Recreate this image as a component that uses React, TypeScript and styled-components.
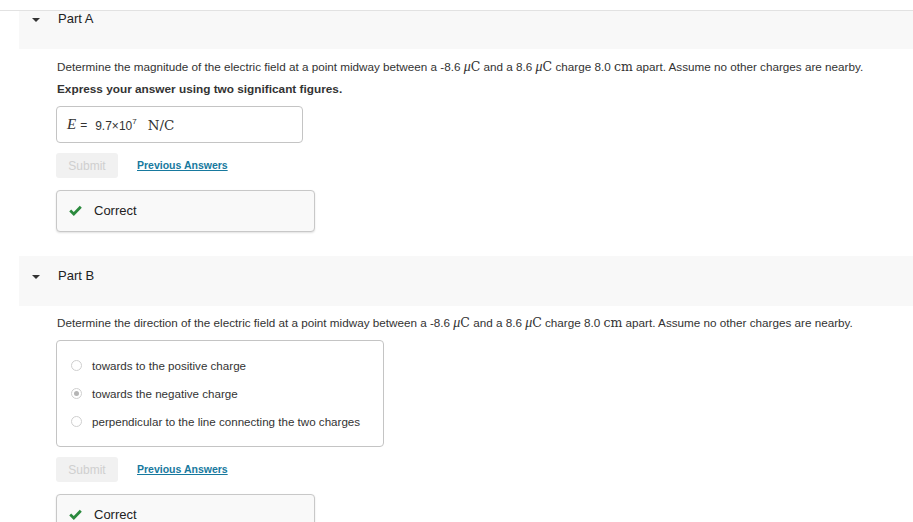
import React from 'react';
import styled, { createGlobalStyle } from 'styled-components';

const Global = createGlobalStyle`
  html, body {
    margin: 0;
    padding: 0;
    background: #ffffff;
    font-family: "Liberation Sans", Arial, sans-serif;
    color: #333333;
  }
`;

interface HeadProps {
  top: number;
  height: number;
}

const S = {
  Page: styled.div`
    width: 913px;
    height: 522px;
    overflow: hidden;
    padding-top: 10px;
    box-sizing: border-box;
  `,
  TopRule: styled.div`
    height: 1px;
    background: #e2e2e2;
  `,
  Part: styled.section`
    margin-left: 19px;
  `,
  PartHead: styled.div<HeadProps>`
    display: flex;
    align-items: flex-start;
    box-sizing: border-box;
    height: ${p => p.height}px;
    padding-top: ${p => p.top}px;
    background: #f8f8f8;
    font-size: 13px;
    line-height: 16px;
    color: #222;
  `,
  Caret: styled.span`
    width: 0;
    height: 0;
    margin: 7px 18px 0 13px;
    border-left: 4px solid transparent;
    border-right: 4px solid transparent;
    border-top: 4px solid #333;
  `,
  Body: styled.div`
    padding: 0 0 0 37px;
  `,
  Prompt: styled.p<{ top: number }>`
    margin: ${p => p.top}px 0 0 1px;
    font-size: 11.7px;
    line-height: 18px;
    color: #333;
  `,
  Hint: styled.p`
    margin: 4px 0 0 1px;
    font-size: 11.8px;
    line-height: 18px;
    font-weight: bold;
    color: #333;
  `,
  Math: styled.span`
    font-family: "DejaVu Serif", "Liberation Serif", serif;
    font-size: 12.5px;
  `,
  Mu: styled.span`
    font-family: "Liberation Serif", "DejaVu Serif", serif;
    font-style: italic;
    font-size: 14px;
  `,
  AnswerBox: styled.div`
    margin-top: 8px;
    width: 247px;
    height: 37px;
    box-sizing: border-box;
    border: 1px solid #c4c4c4;
    border-radius: 4px;
    display: flex;
    align-items: center;
    padding-left: 10px;
    font-size: 12px;
    color: #333;
  `,
  VarE: styled.span`
    font-family: "Liberation Serif", "DejaVu Serif", serif;
    font-style: italic;
    font-size: 15px;
    margin-right: 4px;
  `,
  Value: styled.span`
    margin-left: 8px;
  `,
  Sup: styled.sup`
    font-size: 8px;
    vertical-align: 6px;
  `,
  Unit: styled.span`
    font-family: "DejaVu Serif", "Liberation Serif", serif;
    font-size: 13.5px;
    margin-left: 11px;
  `,
  Actions: styled.div`
    display: flex;
    align-items: center;
    margin-top: 10px;
  `,
  Submit: styled.button`
    width: 62px;
    height: 25px;
    border: none;
    border-radius: 3px;
    background: #f1f1f1;
    color: #cfcfcf;
    font-family: "Liberation Sans", Arial, sans-serif;
    font-size: 12px;
    padding: 0;
  `,
  Link: styled.a`
    margin-left: 19px;
    margin-top: -1px;
    font-size: 10.5px;
    font-weight: bold;
    color: #17799e;
    text-decoration: underline;
  `,
  Feedback: styled.div`
    margin-top: 12px;
    width: 259px;
    height: 42px;
    box-sizing: border-box;
    border: 1px solid #c8c8c8;
    border-radius: 4px;
    background: #f9f9f9;
    box-shadow: 0 1px 2px rgba(0, 0, 0, 0.12);
    display: flex;
    align-items: center;
    padding: 0 0 2px 12px;
    font-size: 13px;
    color: #222;
  `,
  Check: styled.svg`
    width: 13px;
    height: 11px;
    margin-right: 12px;
  `,
  Spacer: styled.div`
    height: 24px;
  `,
  Options: styled.div`
    margin-top: 8px;
    width: 328px;
    height: 107px;
    box-sizing: border-box;
    border: 1px solid #c4c4c4;
    border-radius: 4px;
    padding: 15px 0 0 14px;
    display: flex;
    flex-direction: column;
    gap: 10px;
  `,
  Option: styled.label`
    display: flex;
    align-items: center;
    height: 18px;
    font-size: 11.6px;
    color: #333;
  `,
  Radio: styled.span<{ checked?: boolean }>`
    width: 11px;
    height: 11px;
    box-sizing: border-box;
    border-radius: 50%;
    border: 1px solid #cfcfcf;
    background: #fff;
    margin-right: 10px;
    display: flex;
    align-items: center;
    justify-content: center;
    &::after {
      content: '';
      width: 5px;
      height: 5px;
      border-radius: 50%;
      background: ${p => (p.checked ? '#b5b5b5' : 'transparent')};
    }
  `,
};

const MuC = () => (
  <S.Math>
    <S.Mu>μ</S.Mu>C
  </S.Math>
);

const CheckIcon = () => (
  <S.Check viewBox="0 0 13 11">
    <path d="M1.2 5.6 L4.8 9 L11.8 1.8" fill="none" stroke="#2b8a3e" strokeWidth="2.8" />
  </S.Check>
);

const Header: React.FC<{ label: string; top: number; height: number }> = ({ label, top, height }) => (
  <S.PartHead top={top} height={height}>
    <S.Caret />
    {label}
  </S.PartHead>
);

const Actions = () => (
  <S.Actions>
    <S.Submit disabled>Submit</S.Submit>
    <S.Link href="#">Previous Answers</S.Link>
  </S.Actions>
);

const Feedback = () => (
  <S.Feedback>
    <CheckIcon />
    Correct
  </S.Feedback>
);

const OPTIONS = [
  'towards to the positive charge',
  'towards the negative charge',
  'perpendicular to the line connecting the two charges',
];

const App: React.FC = () => (
  <>
    <Global />
    <S.Page>
      <S.TopRule />
      <S.Part>
        <Header label="Part A" top={0} height={38} />
        <S.Body>
          <S.Prompt top={9}>
            Determine the magnitude of the electric field at a point midway between a -8.6 <MuC /> and a 8.6{' '}
            <MuC /> charge 8.0 <S.Math>cm</S.Math> apart. Assume no other charges are nearby.
          </S.Prompt>
          <S.Hint>Express your answer using two significant figures.</S.Hint>
          <S.AnswerBox>
            <S.VarE>E</S.VarE>=
            <S.Value>
              9.7×10<S.Sup>7</S.Sup>
            </S.Value>
            <S.Unit>N/C</S.Unit>
          </S.AnswerBox>
          <Actions />
          <Feedback />
        </S.Body>
      </S.Part>
      <S.Spacer />
      <S.Part>
        <Header label="Part B" top={12} height={50} />
        <S.Body>
          <S.Prompt top={8}>
            Determine the direction of the electric field at a point midway between a -8.6 <MuC /> and a 8.6{' '}
            <MuC /> charge 8.0 <S.Math>cm</S.Math> apart. Assume no other charges are nearby.
          </S.Prompt>
          <S.Options>
            {OPTIONS.map((o, i) => (
              <S.Option key={o}>
                <S.Radio checked={i === 1} />
                {o}
              </S.Option>
            ))}
          </S.Options>
          <Actions />
          <Feedback />
        </S.Body>
      </S.Part>
    </S.Page>
  </>
);

export default App;
